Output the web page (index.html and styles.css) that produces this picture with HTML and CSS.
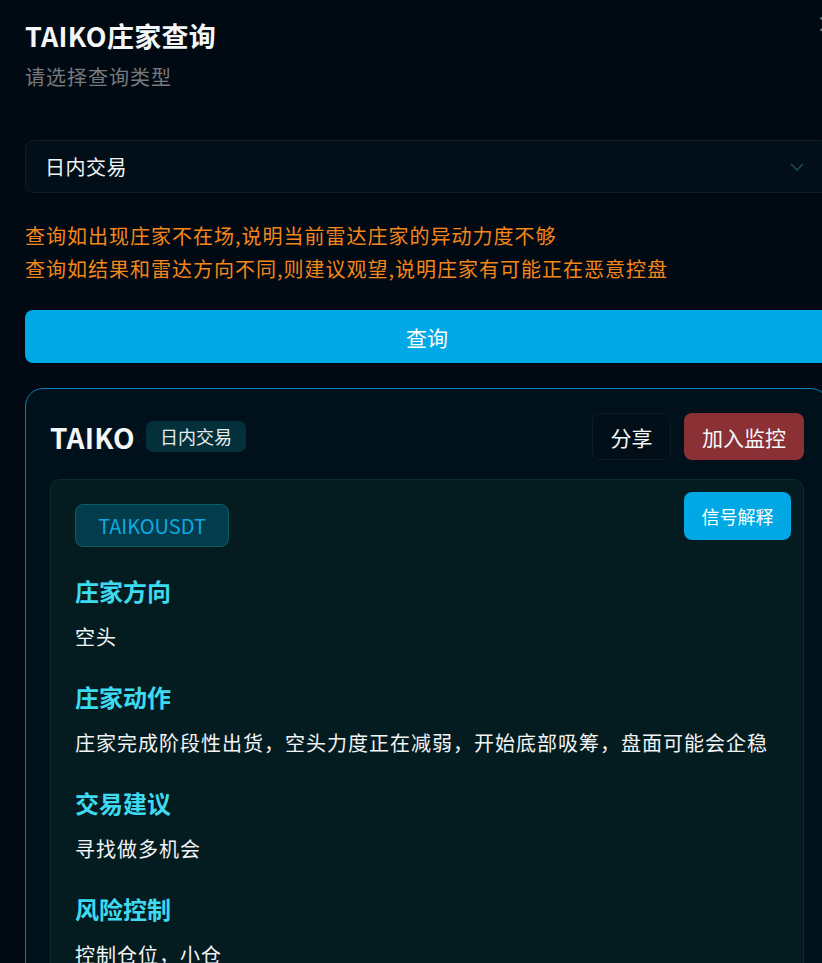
FILE: index.html
```html
<!DOCTYPE html>
<html lang="zh-CN">
<head>
<meta charset="utf-8">
<title>TAIKO庄家查询</title>
<link rel="stylesheet" href="styles.css">
</head>
<body>
<span class="close">×</span>
<main class="page">
  <h1 class="title">TAIKO庄家查询</h1>
  <p class="subtitle">请选择查询类型</p>

  <div class="select">
    <span class="select-value">日内交易</span>
    <svg class="chevron" width="14" height="8" viewBox="0 0 14 8"><path d="M1 1l6 6 6-6" fill="none" stroke="#1f4756" stroke-width="1.6"/></svg>
  </div>

  <div class="notice">
    <p>查询如出现庄家不在场,说明当前雷达庄家的异动力度不够</p>
    <p>查询如结果和雷达方向不同,则建议观望,说明庄家有可能正在恶意控盘</p>
  </div>

  <button class="query-btn">查询</button>

  <section class="card">
    <header class="card-head">
      <div class="card-title">
        <span class="coin">TAIKO</span>
        <span class="badge">日内交易</span>
      </div>
      <div class="actions">
        <button class="btn-share">分享</button>
        <button class="btn-watch">加入监控</button>
      </div>
    </header>

    <div class="panel">
      <button class="btn-explain">信号解释</button>
      <span class="pair">TAIKOUSDT</span>

      <div class="section">
        <h3>庄家方向</h3>
        <p>空头</p>
      </div>
      <div class="section">
        <h3>庄家动作</h3>
        <p>庄家完成阶段性出货，空头力度正在减弱，开始底部吸筹，盘面可能会企稳</p>
      </div>
      <div class="section">
        <h3>交易建议</h3>
        <p>寻找做多机会</p>
      </div>
      <div class="section">
        <h3>风险控制</h3>
        <p>控制仓位，小仓</p>
      </div>
    </div>
  </section>
</main>
</body>
</html>
```
FILE: styles.css
```css
* { box-sizing: border-box; }

html, body {
  margin: 0;
  padding: 0;
  background: #010a13;
  overflow: hidden;
}

body {
  font-family: "Noto Sans CJK SC", "Noto Sans", sans-serif;
  color: #f2f4f5;
  position: relative;
}

.close {
  position: absolute;
  left: 816px;
  top: 10px;
  font-size: 22px;
  line-height: 24px;
  color: #8a9096;
}

.page {
  width: 804px;
  margin-left: 25px;
  padding-top: 19px;
}

.title {
  margin: 0;
  font-size: 27px;
  line-height: 34px;
  font-weight: 700;
  letter-spacing: 0.3px;
  color: #f4f6f7;
}

.subtitle {
  margin: 9px 0 0;
  font-size: 20px;
  line-height: 30px;
  letter-spacing: 1px;
  color: #767a7e;
}

.select {
  margin-top: 48px;
  height: 53px;
  border: 1px solid #0c1f2b;
  border-radius: 8px;
  background: #020f18;
  display: flex;
  align-items: center;
  justify-content: space-between;
  padding: 0 24px 0 19px;
}

.select-value {
  font-size: 20px;
  letter-spacing: 0.5px;
  color: #f2f4f5;
}

.notice {
  margin-top: 26px;
}

.notice p {
  margin: 0;
  font-size: 20px;
  letter-spacing: 1px;
  line-height: 33px;
  color: #f5861a;
}

.query-btn {
  display: block;
  width: 100%;
  margin-top: 25px;
  height: 53px;
  border: 0;
  border-radius: 8px;
  background: #00a9e5;
  color: #ffffff;
  font-family: inherit;
  font-size: 21px;
}

.card {
  margin-top: 25px;
  border: 1px solid #0b7fb5;
  border-radius: 18px;
  background: #01111b;
  padding: 24px 24px 0;
  height: 700px;
}

.card-head {
  display: flex;
  justify-content: space-between;
  align-items: center;
  height: 47px;
}

.card-title {
  display: flex;
  align-items: center;
  gap: 11px;
}

.coin {
  font-size: 28px;
  font-weight: 700;
  letter-spacing: 0.3px;
  color: #f4f6f7;
}

.badge {
  height: 31px;
  line-height: 31px;
  padding: 0 14px;
  border-radius: 7px;
  background: #04303c;
  font-size: 18px;
  color: #e6ecee;
}

.actions {
  display: flex;
  gap: 13px;
}

.actions button {
  height: 47px;
  border-radius: 8px;
  font-family: inherit;
  font-size: 21px;
  color: #f4f6f7;
}

.btn-share {
  width: 79px;
  background: #020f18;
  border: 1px solid #0b1d29;
}

.btn-watch {
  width: 120px;
  background: #8b3034;
  border: 0;
}

.panel {
  position: relative;
  margin-top: 19px;
  border: 1px solid #0a2c28;
  border-radius: 10px;
  background: #041c20;
  padding: 24px 24px 0;
  height: 600px;
}

.btn-explain {
  position: absolute;
  top: 12px;
  right: 12px;
  width: 107px;
  height: 48px;
  border: 0;
  border-radius: 8px;
  background: #00a9e5;
  color: #ffffff;
  font-family: inherit;
  font-size: 18px;
}

.pair {
  display: inline-block;
  width: 154px;
  height: 43px;
  line-height: 41px;
  text-align: center;
  border: 1px solid #0d5a6a;
  border-radius: 8px;
  background: #033c4a;
  color: #0ea8e0;
  font-size: 20px;
}

.section {
  margin-top: 28px;
}

.section h3 {
  margin: 0;
  font-size: 24px;
  line-height: 32px;
  font-weight: 700;
  color: #3ddaf0;
}

.section p {
  margin: 14px 0 0;
  font-size: 20px;
  letter-spacing: 1px;
  line-height: 32px;
  color: #f2f4f5;
}
```
